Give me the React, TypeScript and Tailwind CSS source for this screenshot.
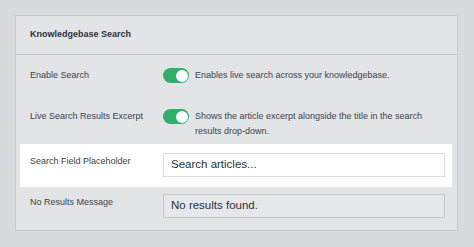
function Toggle() {
  return (
    <div className="w-[26px] h-[15px] rounded-full bg-[#2fb06a] flex items-center justify-end pr-[1.5px] shrink-0">
      <div className="w-[12px] h-[12px] rounded-full bg-white" />
    </div>
  );
}

export default function App() {
  return (
    <div
      className="w-[474px] h-[247px] bg-[#d9dadd] pt-[15px] pl-[15px] text-[#3c434a]"
      style={{ fontFamily: '"Liberation Sans", Arial, sans-serif' }}
    >
      <div className="w-[443px] h-[216px] bg-[#e3e4e7] border border-[#c9cacd] flex flex-col">
        <div className="h-[39px] border-b border-[#c6c7ca] flex items-center pl-[14px] text-[9px] font-bold text-[#2c3338]">
          Knowledgebase Search
        </div>

        <div className="flex items-center mt-[13px] h-[15px] text-[9px]">
          <div className="w-[147px] pl-[14px]">Enable Search</div>
          <Toggle />
          <div className="ml-[6px]">Enables live search across your knowledgebase.</div>
        </div>

        <div className="flex items-start mt-[26px] text-[9px] leading-[15px]">
          <div className="w-[147px] pl-[14px]">Live Search Results Excerpt</div>
          <Toggle />
          <div className="ml-[6px] w-[240px]">
            Shows the article excerpt alongside the title in the search results drop-down.
          </div>
        </div>

        <div className="mt-[5px] mx-[4px] mr-[5px] bg-white flex items-start pt-[9px] pb-[10px]">
          <div className="w-[143px] pl-[10px] text-[9px] pt-[2px]">Search Field Placeholder</div>
          <div className="w-[282px] h-[24px] border border-[#dcdcde] bg-white flex items-center pl-[7px] text-[11.5px] text-[#2c3338]">
            Search articles...
          </div>
        </div>

        <div className="flex items-start mt-[7px]">
          <div className="w-[147px] pl-[14px] text-[9px] pt-[2px]">No Results Message</div>
          <div className="w-[282px] h-[24px] border border-[#c9cacd] bg-[#e6e7ea] flex items-center pl-[7px] text-[11.5px] text-[#2c3338]">
            No results found.
          </div>
        </div>
      </div>
    </div>
  );
}
